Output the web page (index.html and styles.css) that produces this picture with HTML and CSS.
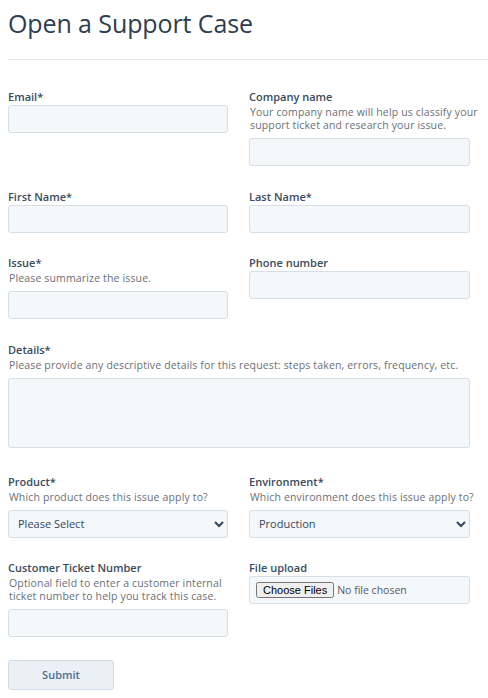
FILE: index.html
```html
<!DOCTYPE html>
<html lang="en">
<head>
<meta charset="utf-8">
<title>Open a Support Case</title>
<link rel="stylesheet" href="styles.css">
</head>
<body>
<h1 class="title">Open a Support Case</h1>
<hr class="rule">
<form class="form">
  <div class="row">
    <div class="field">
      <label class="label">Email*</label>
      <input class="input" type="email">
    </div>
    <div class="field">
      <label class="label">Company name</label>
      <p class="desc">Your company name will help us classify your support ticket and research your issue.</p>
      <input class="input" type="text">
    </div>
  </div>
  <div class="row">
    <div class="field">
      <label class="label">First Name*</label>
      <input class="input" type="text">
    </div>
    <div class="field">
      <label class="label">Last Name*</label>
      <input class="input" type="text">
    </div>
  </div>
  <div class="row">
    <div class="field">
      <label class="label">Issue*</label>
      <p class="desc">Please summarize the issue.</p>
      <input class="input" type="text">
    </div>
    <div class="field">
      <label class="label">Phone number</label>
      <input class="input" type="tel">
    </div>
  </div>
  <div class="row single">
    <div class="field">
      <label class="label">Details*</label>
      <p class="desc">Please provide any descriptive details for this request: steps taken, errors, frequency, etc.</p>
      <textarea class="input area"></textarea>
    </div>
  </div>
  <div class="row">
    <div class="field">
      <label class="label">Product*</label>
      <p class="desc">Which product does this issue apply to?</p>
      <select class="input select"><option>Please Select</option></select>
    </div>
    <div class="field">
      <label class="label">Environment*</label>
      <p class="desc">Which environment does this issue apply to?</p>
      <select class="input select"><option>Production</option></select>
    </div>
  </div>
  <div class="row">
    <div class="field">
      <label class="label">Customer Ticket Number</label>
      <p class="desc">Optional field to enter a customer internal ticket number to help you track this case.</p>
      <input class="input" type="text">
    </div>
    <div class="field">
      <label class="label">File upload</label>
      <div class="input filebox"><input class="file" type="file" multiple></div>
    </div>
  </div>
  <button class="submit" type="button">Submit</button>
</form>
</body>
</html>
```
FILE: styles.css
```css
html, body {
  background: #ffffff;
}
body {
  margin: 0;
  padding: 0 8px;
  font-family: "Open Sans", "Liberation Sans", sans-serif;
  color: #33475b;
  overflow: hidden;
}
.title {
  margin: 7px 0 0;
  font-size: 25px;
  line-height: 32px;
  font-weight: 400;
  color: #2d3e50;
  letter-spacing: -0.1px;
}
.rule {
  margin: 20px -8px 0 0;
  border: 0;
  border-top: 1px solid #e3e6ea;
  height: 0;
}
.form {
  margin-top: 29px;
}
.row {
  display: grid;
  grid-template-columns: 241px 231px;
  align-items: start;
  margin-bottom: 22.5px;
}
.row.single {
  grid-template-columns: 472px;
  margin-bottom: 26px;
}
.field {
  display: flex;
  flex-direction: column;
}
.label {
  display: block;
  font-size: 11px;
  line-height: 16px;
  font-weight: 600;
  color: #3a4b5c;
}
.desc {
  margin: 1px 0 6px 1px;
  font-size: 10.5px;
  line-height: 13px;
  color: #6b6f75;
  letter-spacing: 0.15px;
}
.input {
  display: block;
  box-sizing: border-box;
  width: 220px;
  height: 28px;
  margin: 0;
  padding: 0 8px;
  background: #f5f8fa;
  border: 1px solid #d6dee7;
  border-radius: 3px;
  font-family: inherit;
  font-size: 11px;
  color: #33475b;
}
.row .field:nth-child(2) .input {
  width: 221px;
}
.row.single .input {
  width: 462px;
}
.area {
  height: 70px;
  resize: none;
}
.select {
  padding: 0 5px;
}
.filebox {
  display: flex;
  align-items: center;
  padding: 0 6px;
}
.file {
  font-family: inherit;
  font-size: 10.5px;
  color: #55595e;
}
.file::file-selector-button {
  font-family: "Liberation Sans", Arial, sans-serif;
  font-size: 11px;
  padding: 0 5px;
  height: 16px;
  margin-right: 3px;
}
.submit {
  display: block;
  width: 106px;
  height: 30px;
  margin: 21px 0 0;
  background: #eaf0f6;
  border: 1px solid #d1dbe5;
  border-radius: 3px;
  font-family: inherit;
  font-size: 11px;
  font-weight: 600;
  color: #506e91;
}
```
